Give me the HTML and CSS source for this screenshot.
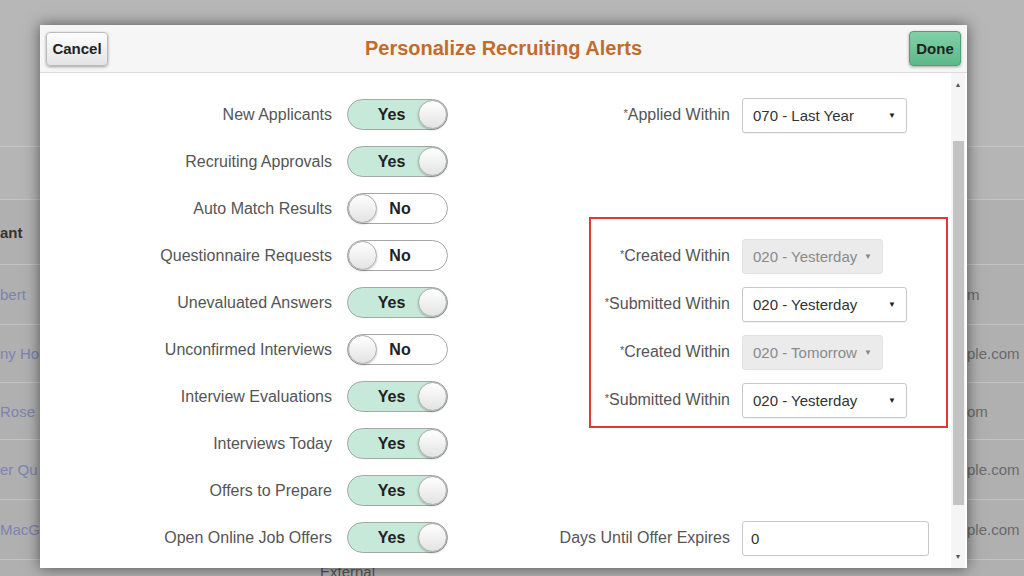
FILE: index.html
```html
<!DOCTYPE html>
<html lang="en">
<head>
    <meta charset="UTF-8">
    <meta name="viewport" content="width=device-width, initial-scale=1.0">
    <title>Personalize Recruiting Alerts</title>
    <link rel="stylesheet" href="styles.css">
</head>
<body>

    <!-- Page behind the modal -->
    <div class="page">
        <div class="page-top"></div>
        <div class="page-row row-a"><span></span><span></span></div>
        <div class="page-row row-b"><span class="col-head">ant</span><span></span></div>
        <div class="page-row row-c"><span class="name">bert</span><span class="mail">m</span></div>
        <div class="page-row row-d"><span class="name">ny Ho</span><span class="mail">ple.com</span></div>
        <div class="page-row row-e"><span class="name">Rose</span><span class="mail">om</span></div>
        <div class="page-row row-f"><span class="name">er Qu</span><span class="mail">ple.com</span></div>
        <div class="page-row row-g"><span class="name">MacG</span><span class="mail">ple.com</span></div>
        <div class="page-row row-h"><span class="ext">External</span></div>
    </div>

    <!-- Modal -->
    <div class="modal">
        <div class="modal-header">
            <button class="btn btn-cancel">Cancel</button>
            <h1>Personalize Recruiting Alerts</h1>
            <button class="btn btn-done">Done</button>
        </div>

        <div class="modal-body">
            <!-- Toggles -->
            <div class="alerts">
                <label>New Applicants</label>
                <div class="toggle on"><span>Yes</span><i class="knob"></i></div>
                <label>Recruiting Approvals</label>
                <div class="toggle on"><span>Yes</span><i class="knob"></i></div>
                <label>Auto Match Results</label>
                <div class="toggle off"><span>No</span><i class="knob"></i></div>
                <label>Questionnaire Requests</label>
                <div class="toggle off"><span>No</span><i class="knob"></i></div>
                <label>Unevaluated Answers</label>
                <div class="toggle on"><span>Yes</span><i class="knob"></i></div>
                <label>Unconfirmed Interviews</label>
                <div class="toggle off"><span>No</span><i class="knob"></i></div>
                <label>Interview Evaluations</label>
                <div class="toggle on"><span>Yes</span><i class="knob"></i></div>
                <label>Interviews Today</label>
                <div class="toggle on"><span>Yes</span><i class="knob"></i></div>
                <label>Offers to Prepare</label>
                <div class="toggle on"><span>Yes</span><i class="knob"></i></div>
                <label>Open Online Job Offers</label>
                <div class="toggle on"><span>Yes</span><i class="knob"></i></div>
            </div>

            <!-- Filters -->
            <div class="filters">
                <div class="field">
                    <label><sup>*</sup>Applied Within</label>
                    <div class="select"><span>070 - Last Year</span><b class="caret">&#9660;</b></div>
                </div>

                <div class="highlight">
                    <div class="field">
                        <label><sup>*</sup>Created Within</label>
                        <div class="select disabled"><span>020 - Yesterday</span><b class="caret">&#9660;</b></div>
                    </div>
                    <div class="field">
                        <label><sup>*</sup>Submitted Within</label>
                        <div class="select"><span>020 - Yesterday</span><b class="caret">&#9660;</b></div>
                    </div>
                    <div class="field">
                        <label><sup>*</sup>Created Within</label>
                        <div class="select disabled"><span>020 - Tomorrow</span><b class="caret">&#9660;</b></div>
                    </div>
                    <div class="field">
                        <label><sup>*</sup>Submitted Within</label>
                        <div class="select"><span>020 - Yesterday</span><b class="caret">&#9660;</b></div>
                    </div>
                </div>

                <div class="field days">
                    <label>Days Until Offer Expires</label>
                    <input type="text" value="0">
                </div>
            </div>

            <!-- Scrollbar -->
            <div class="scrollbar">
                <span class="arrow">&#9650;</span>
                <div class="thumb"></div>
                <span class="arrow">&#9660;</span>
            </div>
        </div>
    </div>

</body>
</html>
```

FILE: styles.css
```css
body {
    margin: 0;
    height: 576px;
    overflow: hidden;
    position: relative;
    font-family: "Liberation Sans", Arial, sans-serif;
    background-color: #b0b0b0;
    color: #555;
}
/* Page behind the modal */
.page-top {
    height: 146px;
    background-color: #b7b7b7;
    border-bottom: 1px solid #c6c6c6;
}
.page-row {
    display: flex;
    justify-content: space-between;
    align-items: center;
    border-bottom: 1px solid #c4c4c4;
    font-size: 15px;
}
.row-a { height: 52px; background-color: #b5b5b5; }
.row-b { height: 64px; }
.row-c { height: 59px; }
.row-d { height: 57px; }
.row-e { height: 56px; }
.row-f { height: 59px; }
.row-g { height: 59px; }
.row-h { height: 30px; align-items: flex-start; border: none; }
.col-head {
    font-weight: bold;
    color: #333;
}
.name {
    color: #7c83b3;
}
.mail {
    width: 57px;
    color: #6a6a6a;
}
.ext {
    padding: 3px 0 0 320px;
    color: #555;
}
/* Modal */
.modal {
    position: absolute;
    left: 40px;
    top: 25px;
    width: 927px;
    height: 543px;
    background-color: #fff;
    box-shadow: 0 0 14px rgba(0, 0, 0, 0.55);
    display: flex;
    flex-direction: column;
}
.modal-header {
    height: 47px;
    flex-shrink: 0;
    display: grid;
    grid-template-columns: 1fr auto 1fr;
    align-items: center;
    padding: 0 6px;
    background-color: #f6f6f6;
    border-bottom: 1px solid #dcdcdc;
}
.modal-header h1 {
    margin: 0;
    font-size: 20px;
    color: #c26c2c;
}
.btn {
    font-family: inherit;
    font-weight: bold;
    font-size: 15px;
    color: #222;
    border-radius: 4px;
    padding: 0;
    box-shadow: 0 1px 3px rgba(0, 0, 0, 0.35);
}
.btn-cancel {
    justify-self: start;
    width: 62px;
    height: 34px;
    background: linear-gradient(#fdfdfd, #e4e4e4);
    border: 1px solid #bbb;
}
.btn-done {
    justify-self: end;
    width: 52px;
    height: 35px;
    background: linear-gradient(#80d0a6, #5db98a);
    border: 1px solid #4f9f76;
}
.modal-body {
    flex: 1;
    display: flex;
}
label {
    font-size: 16px;
    color: #555;
    text-align: right;
    white-space: nowrap;
}
label sup {
    font-size: 11px;
    vertical-align: 3px;
}
/* Toggles */
.alerts {
    width: 500px;
    padding-top: 18px;
    display: grid;
    grid-template-columns: 292px 101px;
    grid-auto-rows: 47px;
    column-gap: 15px;
    align-items: center;
    align-content: start;
}
.toggle {
    position: relative;
    box-sizing: border-box;
    height: 31px;
    border: 1px solid #a3a8a5;
    border-radius: 16px;
    display: flex;
    align-items: center;
    justify-content: center;
    font-weight: bold;
    font-size: 16px;
    color: #222;
}
.toggle.on {
    background-color: #c6e9d9;
    padding-right: 12px;
}
.toggle.off {
    background-color: #fff;
    padding-left: 5px;
}
.knob {
    position: absolute;
    top: 0;
    width: 27px;
    height: 27px;
    border-radius: 50%;
    border: 1px solid #aaa;
    background: linear-gradient(#fff, #e3e3e3);
    box-shadow: 0 1px 2px rgba(0, 0, 0, 0.25);
}
.toggle.on .knob { right: 0; }
.toggle.off .knob { left: 0; }
/* Filters */
.filters {
    width: 410px;
    padding-top: 18px;
}
.field {
    height: 48px;
    display: grid;
    grid-template-columns: 190px auto;
    column-gap: 12px;
    align-items: center;
    justify-items: start;
}
.field label {
    justify-self: end;
}
.highlight {
    margin: 78px 0 0 49px;
    width: 355px;
    border: 2px solid #e0373b;
    padding: 13px 0 2px;
}
.highlight .field {
    grid-template-columns: 139px auto;
}
.select {
    box-sizing: border-box;
    width: 165px;
    height: 35px;
    display: flex;
    align-items: center;
    justify-content: space-between;
    padding: 0 10px;
    border: 1px solid #c8c8c8;
    border-radius: 3px;
    font-size: 15px;
    color: #333;
    box-shadow: 0 1px 1px rgba(0, 0, 0, 0.06);
}
.select.disabled {
    width: 141px;
    background-color: #ebebeb;
    border-color: #e2e2e2;
    color: #8a8a8a;
    box-shadow: none;
}
.caret {
    font-size: 8px;
    color: #222;
}
.select.disabled .caret {
    color: #888;
}
.days {
    margin-top: 86px;
}
.days input {
    box-sizing: border-box;
    width: 187px;
    height: 35px;
    border: 1px solid #c8c8c8;
    border-radius: 3px;
    padding: 0 8px;
    font-family: inherit;
    font-size: 15px;
    color: #333;
}
/* Scrollbar */
.scrollbar {
    margin-left: auto;
    margin-right: 2px;
    width: 14px;
    display: flex;
    flex-direction: column;
    align-items: center;
    background-color: #f5f5f5;
}
.arrow {
    font-size: 7px;
    color: #555;
    padding: 8px 0;
}
.thumb {
    width: 11px;
    margin: 45px 0 40px;
    flex: 1;
    background-color: #c3c3c3;
}
```
